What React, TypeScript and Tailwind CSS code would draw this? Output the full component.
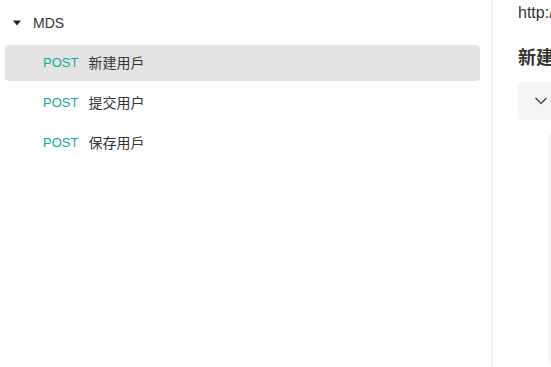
import React from "react";

const items = ["新建用戶", "提交用户", "保存用戶"];

export default function App() {
  return (
    <div
      className="flex w-[551px] h-[367px] overflow-hidden bg-white text-[#333]"
      style={{ fontFamily: '"Liberation Sans", Arial, "Noto Sans CJK SC", sans-serif' }}
    >
      <div className="w-[493px] shrink-0 border-r-2 border-[#f3f3f3] pt-[5px] pl-[5px] pr-[11px] flex flex-col gap-[4px]">
        <div className="h-[36px] flex items-center pl-[8px]">
          <svg width="8" height="6" viewBox="0 0 8 6" className="mr-[12px]">
            <path d="M0 0.5 H8 L4 5.5 Z" fill="#222" />
          </svg>
          <span className="text-[14px] text-[#333]">MDS</span>
        </div>
        {items.map((name, i) => (
          <div
            key={i}
            className={`h-[36px] flex items-center pl-[38px] rounded-[4px] ${i === 0 ? "bg-[#e4e4e4]" : ""}`}
          >
            <span className="text-[13px] text-[#14a899] mr-[10px]">POST</span>
            <span className="text-[14px] text-[#333]">{name}</span>
          </div>
        ))}
      </div>
      <div className="flex-1 min-w-0 pl-[25px] overflow-hidden">
        <div className="text-[16px] leading-[26px] whitespace-nowrap text-[#333]">http://localhost</div>
        <div className="mt-[20px] text-[18px] font-bold leading-[24px] whitespace-nowrap text-[#333]">新建用戶</div>
        <div className="mt-[12px] h-[38px] w-[300px] bg-[#f6f6f6] rounded-[4px] flex items-center pl-[17px]">
          <svg width="12" height="8" viewBox="0 0 12 8">
            <path d="M0.5 1 L6 6.5 L11.5 1" fill="none" stroke="#333" strokeWidth="1.2" />
          </svg>
        </div>
        <div className="mt-[14px] ml-[31px] h-[230px] w-[300px] border border-[#ececec] rounded-[2px]" />
      </div>
    </div>
  );
}
